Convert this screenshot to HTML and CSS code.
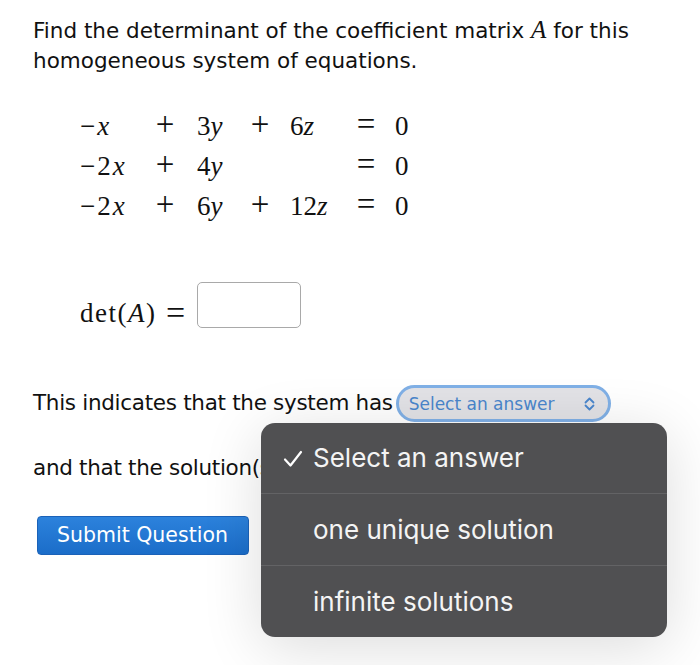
FILE: index.html
```html
<html><head>
  <meta charset="UTF-8">
  <meta name="viewport" content="width=device-width, initial-scale=1.0">
  <title>Question</title>
  <link rel="stylesheet" href="styles.css">
</head>
<body>
  <div class="question">
    <p class="prompt">Find the determinant of the coefficient matrix <span class="mvar">A</span> for this<br>homogeneous system of equations.</p>

    <div class="system">
      <span class="c1">&minus;<i>x</i></span><span class="op">+</span><span class="c3">3<i>y</i></span><span class="op">+</span><span class="c5">6<i>z</i></span><span class="op">=</span><span class="c7">0</span>
      <span class="c1">&minus;2<i>x</i></span><span class="op">+</span><span class="c3">4<i>y</i></span><span class="op"></span><span class="c5"></span><span class="op">=</span><span class="c7">0</span>
      <span class="c1">&minus;2<i>x</i></span><span class="op">+</span><span class="c3">6<i>y</i></span><span class="op">+</span><span class="c5">12<i>z</i></span><span class="op">=</span><span class="c7">0</span>
    </div>

    <div class="det-row">
      <span class="det-label">det(<i>A</i>)</span>
      <span class="det-eq">=</span>
      <input class="det-input" type="text">
    </div>

    <div class="line line-select">
      <span class="tight">This indicates that the system has</span>
      <div class="select">
        <span>Select an answer</span>
        <svg class="chev" width="11" height="14" viewBox="0 0 11 14">
          <path d="M1.5 5.5 L5.5 1.5 L9.5 5.5 M1.5 8.5 L5.5 12.5 L9.5 8.5" fill="none" stroke="#4a86cc" stroke-width="1.8" stroke-linecap="round" stroke-linejoin="round"/>
        </svg>
      </div>
    </div>

    <div class="line line-second">
      <span class="tight">and that the solution(s) is</span>
    </div>

    <button class="submit">Submit Question</button>

    <ul class="menu">
      <li class="menu-item">
        <svg class="check" width="20" height="18" viewBox="0 0 20 18">
          <path d="M2 9.5 L7.5 15.5 L18 2" fill="none" stroke="#fff" stroke-width="2.2" stroke-linecap="round" stroke-linejoin="round"/>
        </svg>
        <span>Select an answer</span>
      </li>
      <li class="menu-item"><span>one unique solution</span></li>
      <li class="menu-item"><span>infinite solutions</span></li>
    </ul>
  </div>
</body>
</html>
```

FILE: styles.css
```css
body, html {
  margin: 0;
  padding: 0;
  background-color: #fff;
}
.question {
  position: relative;
  font-family: 'DejaVu Sans', sans-serif;
  font-size: 21.5px;
  line-height: 30px;
  color: #111;
  padding: 16px 0 0 33px;
  height: 649px;
  overflow: hidden;
}
.prompt {
  margin: 0;
}
.mvar, .system, .det-row {
  font-family: 'Liberation Serif', serif;
}
.mvar {
  font-style: italic;
  font-size: 25px;
  line-height: 20px;
}
.system {
  display: grid;
  grid-template-columns: 68px 34px 62px 32px 62px 56px auto;
  grid-auto-rows: 40px;
  align-items: baseline;
  font-size: 27px;
  line-height: 40px;
  margin: 28px 0 0 47px;
}
.system .c1 {
  letter-spacing: 2px;
}
.system .op {
  text-align: center;
  font-size: 33px;
}
.system .c3 {
  padding-left: 15px;
}
.system .c5 {
  padding-left: 14px;
}
.system .c7 {
  padding-left: 1px;
}
.det-row {
  display: flex;
  align-items: flex-end;
  margin: 58px 0 0 47px;
  font-size: 27px;
  line-height: 30px;
}
.det-label {
  width: 86px;
  letter-spacing: 1.5px;
}
.det-eq {
  width: 31px;
  font-size: 34px;
}
.det-input {
  width: 104px;
  height: 46px;
  box-sizing: border-box;
  border: 1px solid #a9a9a9;
  border-radius: 5px;
  background: #fff;
}
.line {
  display: flex;
  align-items: baseline;
}
.tight {
  letter-spacing: -0.3px;
}
.line-select {
  margin-top: 57px;
}
.select {
  display: flex;
  align-items: center;
  justify-content: space-between;
  box-sizing: border-box;
  width: 215px;
  height: 37px;
  margin-left: 3px;
  padding: 0 13px 0 10px;
  border: 3px solid #80b0e6;
  border-radius: 19px;
  background-color: #e2e2e6;
  color: #4a86cc;
  font-size: 17px;
}
.line-second {
  margin-top: 31px;
}
.submit {
  display: block;
  margin: 33px 0 0 4px;
  width: 212px;
  height: 39px;
  border: 1px solid #1b62b8;
  border-radius: 4px;
  background: linear-gradient(#2c82dc, #1b6dc9);
  color: #fff;
  font-family: 'DejaVu Sans', sans-serif;
  font-size: 20.5px;
  text-align: left;
  padding: 0 0 2px 19px;
}
.menu {
  position: absolute;
  left: 261px;
  top: 423px;
  width: 406px;
  margin: 0;
  padding: 0;
  list-style: none;
  background-color: #505052;
  border-radius: 14px;
  box-shadow: 0 10px 60px rgba(0,0,0,0.14);
  font-family: Inter, 'Liberation Sans', sans-serif;
  font-size: 26px;
  color: #f4f4f4;
}
.menu-item {
  position: relative;
  height: 71px;
  display: flex;
  align-items: center;
  padding-left: 52px;
  border-top: 1px solid #636365;
}
.menu-item:first-child {
  height: 70px;
  border-top: none;
}
.check {
  position: absolute;
  left: 22px;
  top: 27px;
}
```
